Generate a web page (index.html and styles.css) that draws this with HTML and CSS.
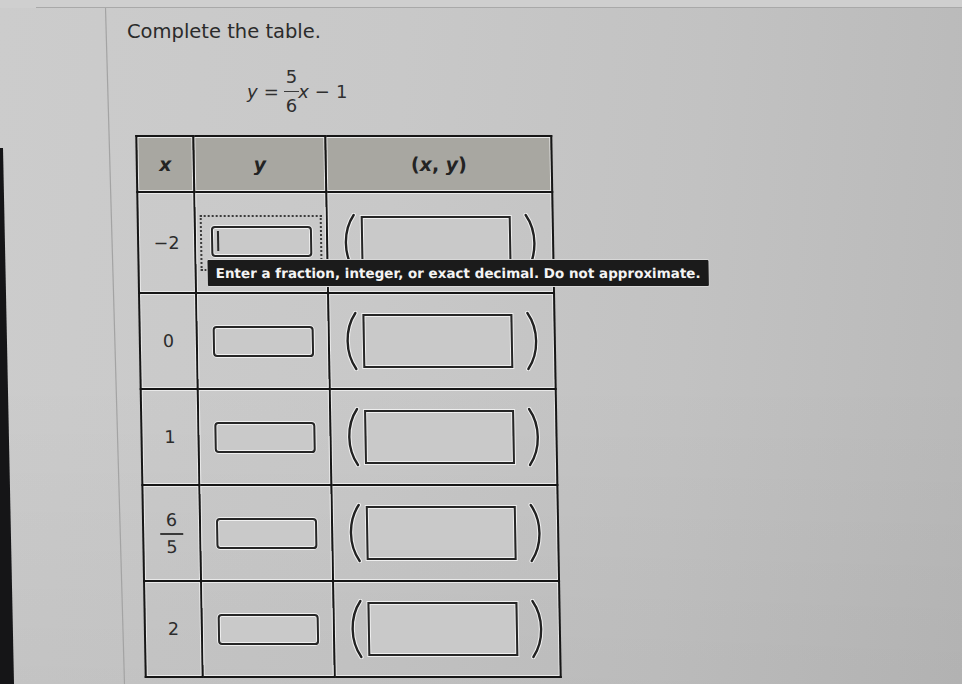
FILE: index.html
```html
<!DOCTYPE html>
<html lang="en">
<head>
<meta charset="utf-8">
<title>Complete the table</title>
<link rel="stylesheet" href="styles.css">
</head>
<body>
<div class="topbar"><div class="topline"></div></div>
<div class="screen">
  <div class="bezel"><div class="bezel-dark"></div></div>
  <div class="gutter"></div>
  <div class="seam">
    <svg class="seam-line" viewBox="0 0 20 676" preserveAspectRatio="none" aria-hidden="true">
      <line x1="0.5" y1="0" x2="19.5" y2="676" stroke="#a3a3a3" stroke-width="1.2"/>
    </svg>
  </div>
  <main class="panel">
    <h1 class="title">Complete the table.</h1>
    <div class="equation">
      <span class="var">y</span>
      <span class="op">=</span>
      <span class="frac"><span class="num">5</span><span class="den">6</span></span>
      <span class="var xvar">x</span>
      <span class="op">&minus;</span>
      <span class="one">1</span>
    </div>
    <table class="grid">
      <colgroup><col class="c1"><col class="c2"><col class="c3"></colgroup>
      <thead>
        <tr class="head">
          <th><i>x</i></th>
          <th><i>y</i></th>
          <th>(<i>x</i>, <i>y</i>)</th>
        </tr>
      </thead>
      <tbody>
        <tr class="r1">
          <td class="xv">&minus;2</td>
          <td class="yv">
            <div class="focus">
              <div class="ybox"><span class="caret"></span></div>
              <div class="tooltip">Enter a fraction, integer, or exact decimal. Do not approximate.</div>
            </div>
          </td>
          <td class="pv">
            <div class="pair">
              <svg class="paren" viewBox="0 0 16 60" aria-hidden="true"><path d="M13 2 C 2 18, 2 42, 13 58" class="halo"/><path d="M13 2 C 2 18, 2 42, 13 58" class="ink"/></svg>
              <div class="pbox"></div>
              <svg class="paren" viewBox="0 0 16 60" aria-hidden="true"><path d="M3 2 C 14 18, 14 42, 3 58" class="halo"/><path d="M3 2 C 14 18, 14 42, 3 58" class="ink"/></svg>
            </div>
          </td>
        </tr>
        <tr>
          <td class="xv">0</td>
          <td class="yv"><div class="ybox"></div></td>
          <td class="pv">
            <div class="pair">
              <svg class="paren" viewBox="0 0 16 60" aria-hidden="true"><path d="M13 2 C 2 18, 2 42, 13 58" class="halo"/><path d="M13 2 C 2 18, 2 42, 13 58" class="ink"/></svg>
              <div class="pbox"></div>
              <svg class="paren" viewBox="0 0 16 60" aria-hidden="true"><path d="M3 2 C 14 18, 14 42, 3 58" class="halo"/><path d="M3 2 C 14 18, 14 42, 3 58" class="ink"/></svg>
            </div>
          </td>
        </tr>
        <tr>
          <td class="xv">1</td>
          <td class="yv"><div class="ybox"></div></td>
          <td class="pv">
            <div class="pair">
              <svg class="paren" viewBox="0 0 16 60" aria-hidden="true"><path d="M13 2 C 2 18, 2 42, 13 58" class="halo"/><path d="M13 2 C 2 18, 2 42, 13 58" class="ink"/></svg>
              <div class="pbox"></div>
              <svg class="paren" viewBox="0 0 16 60" aria-hidden="true"><path d="M3 2 C 14 18, 14 42, 3 58" class="halo"/><path d="M3 2 C 14 18, 14 42, 3 58" class="ink"/></svg>
            </div>
          </td>
        </tr>
        <tr>
          <td class="xv"><span class="frac small"><span class="num">6</span><span class="den">5</span></span></td>
          <td class="yv"><div class="ybox"></div></td>
          <td class="pv">
            <div class="pair">
              <svg class="paren" viewBox="0 0 16 60" aria-hidden="true"><path d="M13 2 C 2 18, 2 42, 13 58" class="halo"/><path d="M13 2 C 2 18, 2 42, 13 58" class="ink"/></svg>
              <div class="pbox"></div>
              <svg class="paren" viewBox="0 0 16 60" aria-hidden="true"><path d="M3 2 C 14 18, 14 42, 3 58" class="halo"/><path d="M3 2 C 14 18, 14 42, 3 58" class="ink"/></svg>
            </div>
          </td>
        </tr>
        <tr>
          <td class="xv">2</td>
          <td class="yv"><div class="ybox"></div></td>
          <td class="pv">
            <div class="pair">
              <svg class="paren" viewBox="0 0 16 60" aria-hidden="true"><path d="M13 2 C 2 18, 2 42, 13 58" class="halo"/><path d="M13 2 C 2 18, 2 42, 13 58" class="ink"/></svg>
              <div class="pbox"></div>
              <svg class="paren" viewBox="0 0 16 60" aria-hidden="true"><path d="M3 2 C 14 18, 14 42, 3 58" class="halo"/><path d="M3 2 C 14 18, 14 42, 3 58" class="ink"/></svg>
            </div>
          </td>
        </tr>
      </tbody>
    </table>
  </main>
</div>
</body>
</html>
```
FILE: styles.css
```css
html, body {
  margin: 0;
  padding: 0;
}

body {
  width: 962px;
  height: 684px;
  overflow: hidden;
  font-family: "DejaVu Sans", Verdana, sans-serif;
  color: #2a2a2a;
  background:
    linear-gradient(180deg, rgba(0,0,0,0) 55%, rgba(0,0,0,0.04) 100%),
    linear-gradient(95deg, #cccccc 0%, #c8c8c8 40%, #c2c2c2 70%, #b9b9b9 100%);
}

.topbar {
  height: 8px;
  display: flex;
  align-items: flex-end;
  background: #cfcfcf;
}

.topline {
  flex: 1;
  margin-left: 36px;
  border-bottom: 1px solid #a9a9a9;
}

.screen {
  display: flex;
  height: 676px;
}

.bezel {
  width: 16px;
  flex: none;
}

.bezel-dark {
  height: 100%;
  background: #151517;
  clip-path: polygon(0 140px, 3px 140px, 14px 100%, 0 100%);
}

.gutter {
  width: 89px;
  flex: none;
}

.seam {
  width: 20px;
  flex: none;
}

.seam-line {
  display: block;
  width: 20px;
  height: 676px;
}

.panel {
  flex: 1;
  padding-left: 2px;
}

.title {
  margin: 12px 0 0 0;
  font-size: 19.5px;
  line-height: 24px;
  font-weight: normal;
  color: #2b2b2b;
}

.equation {
  margin-top: 20px;
  height: 54px;
  display: flex;
  align-items: center;
  padding-left: 120px;
  font-size: 18px;
  color: #2f2f2f;
}

.var {
  font-style: italic;
}

.op {
  margin: 0 6px;
}

.frac {
  display: inline-flex;
  flex-direction: column;
  align-items: center;
  line-height: 21px;
}

.frac .num {
  padding: 0 1px 4px;
  border-bottom: 1.5px solid #3a3a3a;
  width: 100%;
  text-align: center;
}

.frac .den {
  padding-top: 3px;
}

.grid {
  margin: 17px 0 0 13px;
  border-collapse: collapse;
  table-layout: fixed;
  width: 415px;
  transform: skewX(1deg);
  transform-origin: 50% 50%;
}

.c1 { width: 57px; }
.c2 { width: 132px; }
.c3 { width: 226px; }

.grid th,
.grid td {
  border: 2px solid #161616;
  box-shadow: inset 0 0 0 1px #e9e9e9;
  padding: 0;
  text-align: center;
  vertical-align: middle;
}

.head {
  height: 56px;
}

.grid th {
  background: #a8a7a1;
  font-size: 19px;
  font-weight: bold;
  color: #232323;
}

.grid tbody tr {
  height: 96px;
}

.grid tbody tr.r1 {
  height: 101px;
}

.xv {
  font-size: 17.5px;
  color: #2c2c2c;
}

.frac.small {
  line-height: 17px;
}

.frac.small .num {
  padding: 0 3px 4px;
  border-bottom-width: 2px;
}

.frac.small .den {
  padding-top: 4px;
}

.yv {
  position: relative;
}

.ybox {
  width: 97px;
  height: 27px;
  margin: 0 auto;
  border: 2px solid #262626;
  border-radius: 4px;
  box-shadow: 0 0 0 1px #efefef, inset 0 0 0 1px #efefef;
  background: #c9c9c9;
  display: flex;
  align-items: center;
}

.focus {
  position: relative;
  width: 100px;
  margin: 0 auto;
  padding: 9px 9px 12px;
  border: 2px dotted #3b3b3b;
}

.caret {
  width: 2px;
  height: 20px;
  margin-left: 4px;
  background: #2a2a2a;
}

.tooltip {
  position: absolute;
  left: 4px;
  top: 42px;
  z-index: 2;
  height: 26px;
  line-height: 26px;
  padding: 0 8px;
  white-space: nowrap;
  background: #1b1b1b;
  border: 1px solid #d8d8d8;
  border-radius: 2px;
  color: #f4f4f4;
  font-size: 13.5px;
  font-weight: bold;
  text-align: left;
}

.pair {
  display: flex;
  align-items: center;
  justify-content: center;
  gap: 4px;
}

.paren {
  width: 16px;
  height: 60px;
  flex: none;
}

.paren .halo {
  fill: none;
  stroke: #f0f0f0;
  stroke-width: 4.5;
  stroke-linecap: round;
}

.paren .ink {
  fill: none;
  stroke: #222;
  stroke-width: 2.4;
  stroke-linecap: round;
}

.pbox {
  width: 146px;
  height: 50px;
  margin-right: 8px;
  border: 2px solid #262626;
  box-shadow: 0 0 0 1px #efefef, inset 0 0 0 1px #efefef;
  background: #c9c9c9;
}
```
